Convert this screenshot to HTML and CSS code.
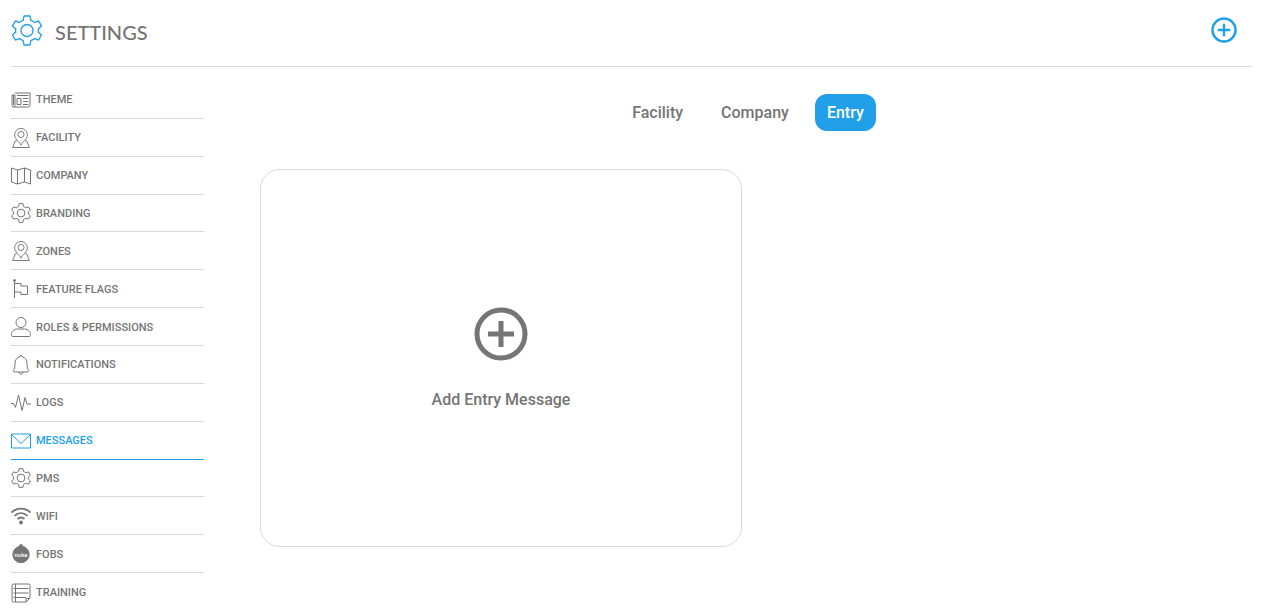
FILE: index.html
```
<!DOCTYPE html>
<html lang="en">
<head>
<meta charset="utf-8">
<title>Settings</title>
<link rel="stylesheet" href="styles.css">
</head>
<body>
<svg class="sprite" aria-hidden="true">
  <symbol id="gear" viewBox="0 0 32 32">
    <path d="M13 1h6l1 4.600q2.200.7 3.800 2.100L28 6.200l3 5.200-3.400 3q.5 1.600 0 3.200l3.400 3-3 5.200-4.200-1.500q-1.600 1.400-3.800 2.100L19 31h-6l-1-4.600q-2.200-.7-3.800-2.100L4 25.800l-3-5.200 3.400-3q-.5-1.600 0-3.200l-3.400-3L4 6.200l4.200 1.500q1.600-1.400 3.800-2.100z" stroke-linejoin="round"/>
    <circle cx="16" cy="16" r="6.200"/>
  </symbol>
  <symbol id="pin" viewBox="0 0 20 21">
    <path d="M10 18C8.500 14.500 3.300 11.500 3.300 7.200a6.700 6.700 0 0 1 13.400 0c0 4.300-5.200 7.300-6.700 10.800z"/>
    <circle cx="10" cy="6.800" r="3.200"/>
    <path d="M5.500 13.500H4L1.200 20.500h17.600L16 13.500h-1.500"/>
  </symbol>
  <symbol id="plus" viewBox="0 0 54 54">
    <circle cx="27" cy="27" r="24" stroke-width="5"/>
    <path d="M27 14v26M14 27h26" stroke-width="5"/>
  </symbol>
</svg>

<header class="header">
  <svg class="header-icon" aria-hidden="true"><use href="#gear"/></svg>
  <h1 class="title">SETTINGS</h1>
  <button class="add" type="button" aria-label="Add message"><svg class="add-icon" aria-hidden="true"><use href="#plus"/></svg></button>
</header>

<div class="layout">
  <nav class="sidebar" aria-label="Settings">
    <a class="item" href="#theme"><svg class="icon" viewBox="0 0 20 20"><path d="M4 3h15v12.500a1.500 1.500 0 0 1-1.500 1.500h-15A1.500 1.500 0 0 1 1 15.500V5h3v10.500a1.500 1.500 0 0 1-1.500 1.500M2.500 5V15M6 5.500h11.500M12 8.500h5.500M12 11.500h5.500M12 14.500h5.500M6 8.500h4v6H6z"/></svg>THEME</a>
    <a class="item" href="#facility"><svg class="icon"><use href="#pin"/></svg>FACILITY</a>
    <a class="item" href="#company"><svg class="icon" viewBox="0 0 20 20"><path d="M.5 2 6.500 4l7-2 6 2v14l-6-2-7 2-6-2zM6.500 4V18M13.500 2V16"/></svg>COMPANY</a>
    <a class="item" href="#branding"><svg class="icon gear"><use href="#gear"/></svg>BRANDING</a>
    <a class="item" href="#zones"><svg class="icon"><use href="#pin"/></svg>ZONES</a>
    <a class="item" href="#flags"><svg class="icon" viewBox="0 0 20 20"><path d="M3.500 1v18M3.500 4.500H10V7h6.500v8.500H10V13H3.500"/><circle cx="3.500" cy="1.500" r="1" fill="currentColor"/></svg>FEATURE FLAGS</a>
    <a class="item" href="#roles"><svg class="icon" viewBox="0 0 20 20"><circle cx="10" cy="5.500" r="5"/><path d="M6.500 12h7c3.500 0 6 2.500 6 5.500 0 1.500-.5 2-1.500 2H2c-1 0-1.500-.5-1.500-2 0-3 2.500-5.500 6-5.500z"/></svg>ROLES &amp; PERMISSIONS</a>
    <a class="item" href="#notifications"><svg class="icon" viewBox="0 0 20 20"><path d="M8.500 2a1.500 1.500 0 0 1 3 0c3 .8 4.500 3 4.500 6 0 4 .5 6.500 2 7.500-.3 1-1 1.500-2 1.500H4c-1 0-1.700-.5-2-1.500 1.500-1 2-3.500 2-7.500 0-3 1.500-5.200 4.500-6zM8 17c.5 3 3.500 3 4 0"/></svg>NOTIFICATIONS</a>
    <a class="item" href="#logs"><svg class="icon" viewBox="0 0 20 20"><path d="M0 10.500h2.500l2 4L7.500 2l3.500 15.500L14 4.500l2 6.500h4"/></svg>LOGS</a>
    <a class="item active" href="#messages" aria-current="page"><svg class="icon" viewBox="0 0 20 20"><path d="M.5 3h19v14H.5zM.5 3.500l9.500 9L19.500 3.500"/></svg>MESSAGES</a>
    <a class="item" href="#pms"><svg class="icon gear"><use href="#gear"/></svg>PMS</a>
    <a class="item" href="#wifi"><svg class="icon bold" viewBox="0 0 20 20"><path d="M.5 6.500C6 1.200 14 1.200 19.500 6.500M3.500 9.800c4-3.600 9-3.600 13 0M6.500 13c2.300-2 4.700-2 7 0"/><circle cx="10" cy="16.500" r="1" fill="currentColor"/></svg>WIFI</a>
    <a class="item" href="#fobs"><svg class="icon" viewBox="0 0 20 20"><circle cx="10" cy="1.800" r="1.300" fill="currentColor"/><circle cx="10" cy="10.500" r="8.200" fill="currentColor"/><text class="fob-text" x="10" y="13" text-anchor="middle">noke</text></svg>FOBS</a>
    <a class="item" href="#training"><svg class="icon" viewBox="0 0 20 20"><path d="M2.500 1h15A1.500 1.500 0 0 1 19 2.500V15l-4 4H2.500A1.500 1.500 0 0 1 1 17.500v-15A1.500 1.500 0 0 1 2.500 1zM4.500 1v18M15 19v-3.500h4M2.500 5.500h15M2.500 10h15M2.500 14.500H15"/></svg>TRAINING</a>
  </nav>

  <main class="main">
    <div class="tabs">
      <button class="tab" type="button">Facility</button>
      <button class="tab" type="button">Company</button>
      <button class="tab selected" type="button">Entry</button>
    </div>
    <div class="cards">
      <button class="card" type="button">
        <svg class="card-icon" aria-hidden="true"><use href="#plus"/></svg>
        <span>Add Entry Message</span>
      </button>
    </div>
  </main>
</div>
</body>
</html>
```
FILE: styles.css
```
* {
  box-sizing: border-box;
}

body {
  margin: 0;
  padding: 0 21px 0 11px;
  background: #fff;
  color: #757575;
  font-family: Roboto, sans-serif;
  font-weight: 500;
}

button {
  font: inherit;
  color: inherit;
  border: 0;
  background: none;
  cursor: pointer;
}

svg {
  fill: none;
  stroke: currentColor;
}

.sprite {
  display: none;
}

.header {
  display: flex;
  align-items: center;
  padding: 15px 15px 20px 0;
  border-bottom: 1px solid #d9dcde;
}

.header-icon {
  width: 32px;
  height: 31px;
  color: #219fe8;
  stroke-width: 1.400;
}

.title {
  margin: 0;
  padding: 2px 0 0 12px;
  font-family: Lato, sans-serif;
  font-size: 20px;
  line-height: 24px;
  font-weight: 500;
}

.add {
  display: flex;
  margin-left: auto;
  padding: 0 0 1px;
  color: #219fe8;
}

.add-icon {
  width: 26px;
  height: 26px;
}

.layout {
  display: flex;
  gap: 40px;
  padding-top: 14px;
}

.sidebar {
  display: grid;
  grid-auto-rows: 1fr;
  flex: none;
  width: 193px;
  min-height: 530px;
}

.item {
  display: flex;
  align-items: center;
  gap: 5px;
  padding-top: 1px;
  border-bottom: 1px solid #d6d8d8;
  color: inherit;
  font-size: 11px;
  line-height: 15px;
  text-decoration: none;
}

.item:last-child {
  border-bottom: 0;
}

.item.active {
  color: #219fe8;
  border-bottom-color: #219fe8;
}

.icon {
  width: 20px;
  height: 20px;
}

.gear {
  stroke-width: 1.600;
}

.bold {
  stroke-width: 1.800;
}

.fob-text {
  fill: #fff;
  stroke: none;
  font-size: 6px;
}

.main {
  flex: 1;
}

.tabs {
  display: flex;
  justify-content: center;
  gap: 14px;
  padding-top: 13px;
}

.tab {
  padding: 8px 12px;
  border-radius: 12px;
  font-size: 16px;
  line-height: 21px;
}

.selected {
  background: #219fe8;
  color: #fff;
}

.cards {
  display: grid;
  grid-template-columns: 1fr 1fr;
  gap: 12px;
  padding: 38px 16px 0;
}

.card {
  display: flex;
  flex-direction: column;
  align-items: center;
  justify-content: center;
  gap: 28px;
  min-height: 378px;
  padding-top: 3px;
  border: 1px solid #d9d9d9;
  border-radius: 20px;
  font-size: 16px;
  line-height: 22px;
}

.card-icon {
  width: 54px;
  height: 54px;
}
```
